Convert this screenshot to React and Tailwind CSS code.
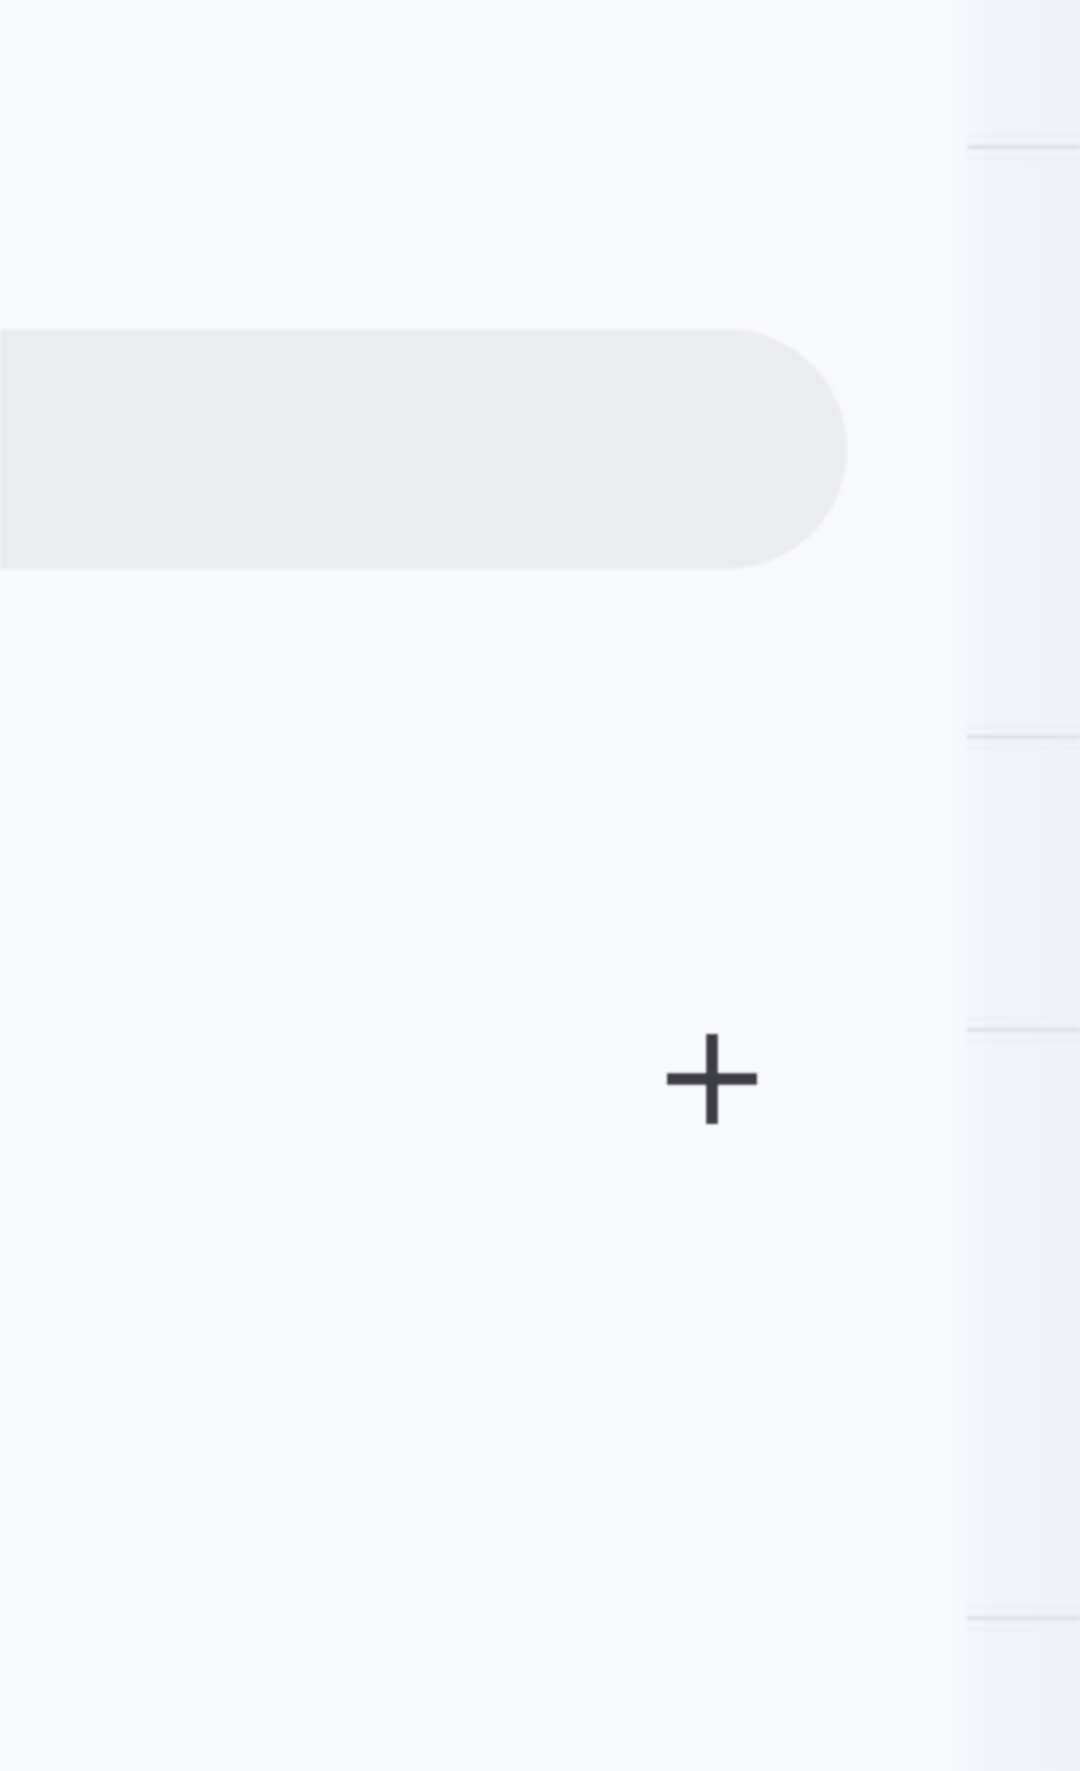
import { Plus } from 'lucide-react'

// sidebar row separators, top offsets measured from the previous group
const dividers = [135, 566, 269, 564]

export default function App() {
  return (
    <div className="flex min-h-[1771px] w-full overflow-hidden bg-[#f8f9fd]">
      <main className="flex flex-1 flex-col">
        <div className="mt-[329px] h-[240px] w-[847px] rounded-r-full bg-[#ebecf0] blur-[1.5px]" />
        <div className="mt-[433px] flex pl-[635px]">
          <Plus className="h-[154px] w-[154px] text-[#3d3d45] blur-[1px]" strokeWidth={1.8} strokeLinecap="butt" />
        </div>
      </main>

      <aside className="flex w-[140px] shrink-0 bg-gradient-to-r from-[#f8f9fd] via-[#f1f3f9] via-40% to-[#f0f2f9]">
        <div className="flex w-full flex-col pl-[27px]">
          {dividers.map((gap, i) => (
            <div key={i} style={{ marginTop: gap }} className="flex flex-col gap-[8px] blur-[1.5px]">
              <div className="h-[2px] w-full bg-[#eceef4]" />
              <div className="h-[4px] w-full bg-[#dfe1e8]" />
              <div className="h-[2px] w-full bg-[#eceef4]" />
            </div>
          ))}
        </div>
      </aside>
    </div>
  )
}
